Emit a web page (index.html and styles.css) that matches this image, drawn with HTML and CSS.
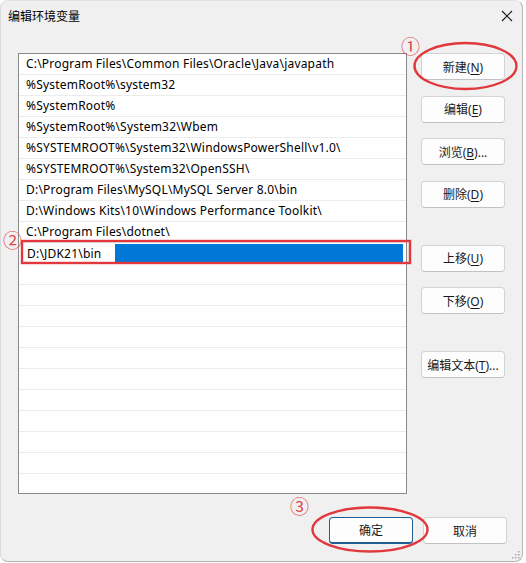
FILE: index.html
```html
<!DOCTYPE html>
<html lang="zh-CN">
<head>
<meta charset="UTF-8" />
<title>编辑环境变量</title>
<link rel="stylesheet" href="styles.css">
</head>
<body>
  <div class="window">
    <div class="titlebar">
      <span class="title">编辑环境变量</span>
      <svg class="close" width="12" height="12" viewBox="0 0 12 12">
        <path d="M1 1 L11 11 M11 1 L1 11" stroke="#1a1a1a" stroke-width="1.1" fill="none" />
      </svg>
    </div>

    <div class="main">
      <div class="list">
        <div class="row">C:\Program Files\Common Files\Oracle\Java\javapath</div>
        <div class="row">%SystemRoot%\system32</div>
        <div class="row">%SystemRoot%</div>
        <div class="row">%SystemRoot%\System32\Wbem</div>
        <div class="row">%SYSTEMROOT%\System32\WindowsPowerShell\v1.0\</div>
        <div class="row">%SYSTEMROOT%\System32\OpenSSH\</div>
        <div class="row">D:\Program Files\MySQL\MySQL Server 8.0\bin</div>
        <div class="row">D:\Windows Kits\10\Windows Performance Toolkit\</div>
        <div class="row">C:\Program Files\dotnet\</div>
        <div class="row selected"><div class="edit"><span class="edit-text">D:\JDK21\bin</span></div></div>
        <div class="row"></div>
        <div class="row"></div>
        <div class="row"></div>
        <div class="row"></div>
        <div class="row"></div>
        <div class="row"></div>
        <div class="row"></div>
        <div class="row"></div>
        <div class="row"></div>
        <div class="row"></div>
        <div class="row last"></div>
      </div>

      <div class="actions">
        <button class="btn">新建(<u>N</u>)</button>
        <button class="btn">编辑(<u>E</u>)</button>
        <button class="btn">浏览(<u>B</u>)...</button>
        <button class="btn">删除(<u>D</u>)</button>
        <button class="btn spaced">上移(<u>U</u>)</button>
        <button class="btn">下移(<u>O</u>)</button>
        <button class="btn spaced">编辑文本(<u>T</u>)...</button>
      </div>
    </div>

    <div class="footer">
      <button class="btn default">确定</button>
      <button class="btn">取消</button>
    </div>

    <svg class="grip" width="10" height="10" viewBox="0 0 10 10">
      <rect x="8" y="2" width="1.5" height="1.5" fill="#a8a8a8" />
      <rect x="5" y="5" width="1.5" height="1.5" fill="#a8a8a8" />
      <rect x="8" y="5" width="1.5" height="1.5" fill="#a8a8a8" />
      <rect x="2" y="8" width="1.5" height="1.5" fill="#a8a8a8" />
      <rect x="5" y="8" width="1.5" height="1.5" fill="#a8a8a8" />
      <rect x="8" y="8" width="1.5" height="1.5" fill="#a8a8a8" />
    </svg>

    <!-- red markup drawn over the dialog -->
    <svg class="markup" width="526" height="563" viewBox="0 0 526 563">
      <ellipse cx="465.5" cy="66" rx="51" ry="23" />
      <rect x="22" y="241" width="388" height="22" />
      <ellipse cx="370" cy="529.5" rx="57.5" ry="22" />
    </svg>
    <span class="mark mark-1">①</span>
    <span class="mark mark-2">②</span>
    <span class="mark mark-3">③</span>
  </div>
</body>
</html>
```

FILE: styles.css
```css
body {
  margin: 0;
  background: #ffffff;
  font-family: "Noto Sans", "Noto Sans CJK SC", sans-serif;
  font-size: 12px;
  color: #000;
}
.window {
  position: relative;
  width: 521px;
  height: 560px;
  background: #f0f0f0;
  border: 1px solid #b4b4b4;
  border-top-color: #e2e2e2;
  border-left-color: #dadada;
  border-radius: 8px;
  display: flex;
  flex-direction: column;
}
.titlebar {
  height: 29px;
  display: flex;
  align-items: center;
  justify-content: space-between;
  padding: 0 8px 0 7px;
}
.title {
  font-size: 12px;
}
.close {
  margin-right: 1px;
}
.main {
  display: flex;
  padding: 23px 0 0 17px;
  gap: 14px;
}
.list {
  width: 389px;
  height: 441px;
  background: #fff;
  border: 1px solid #8a8a8a;
  box-sizing: border-box;
  overflow: hidden;
}
.row {
  height: 20px;
  line-height: 20px;
  border-bottom: 1px solid #ececec;
  padding-left: 7px;
  white-space: nowrap;
  letter-spacing: 0.2px;
}
.row.last {
  border-bottom: none;
}
.row.selected {
  padding: 1px 3px 1px 4px;
  height: 19px;
  border-bottom: none;
}
.edit {
  height: 19px;
  background: #0078d7;
  display: flex;
}
.edit-text {
  background: #fff;
  line-height: 19px;
  padding: 0 5px 0 4px;
  width: 83px;
}
.actions {
  display: flex;
  flex-direction: column;
  gap: 15.5px;
}
.btn {
  width: 84px;
  height: 27px;
  padding: 0;
  background: #fdfdfd;
  border: 1px solid #d3d3d3;
  border-bottom-color: #c2c2c2;
  border-radius: 4px;
  font-family: "Noto Sans", "Noto Sans CJK SC", sans-serif;
  font-size: 12px;
  color: #1a1a1a;
}
.btn u {
  text-underline-offset: 2px;
}
.btn.spaced {
  margin-top: 21.5px;
}
.btn.default {
  border: 1px solid #1f5f96;
  border-bottom-width: 2px;
}
.footer {
  display: flex;
  justify-content: flex-end;
  gap: 10px;
  margin-top: 23px;
  padding-right: 15px;
}
.grip {
  position: absolute;
  right: 2px;
  bottom: 2px;
}
.markup {
  position: absolute;
  left: -1px;
  top: -1px;
  pointer-events: none;
  fill: none;
  stroke: #e0383c;
  stroke-width: 2.4;
}
.mark {
  position: absolute;
  color: #e0474c;
  font-family: "Noto Sans CJK SC", sans-serif;
  font-size: 19px;
  line-height: 1;
}
.mark-1 {
  left: 400px;
  top: 35px;
}
.mark-2 {
  left: 2px;
  top: 229px;
}
.mark-3 {
  left: 289px;
  top: 495px;
}
```
